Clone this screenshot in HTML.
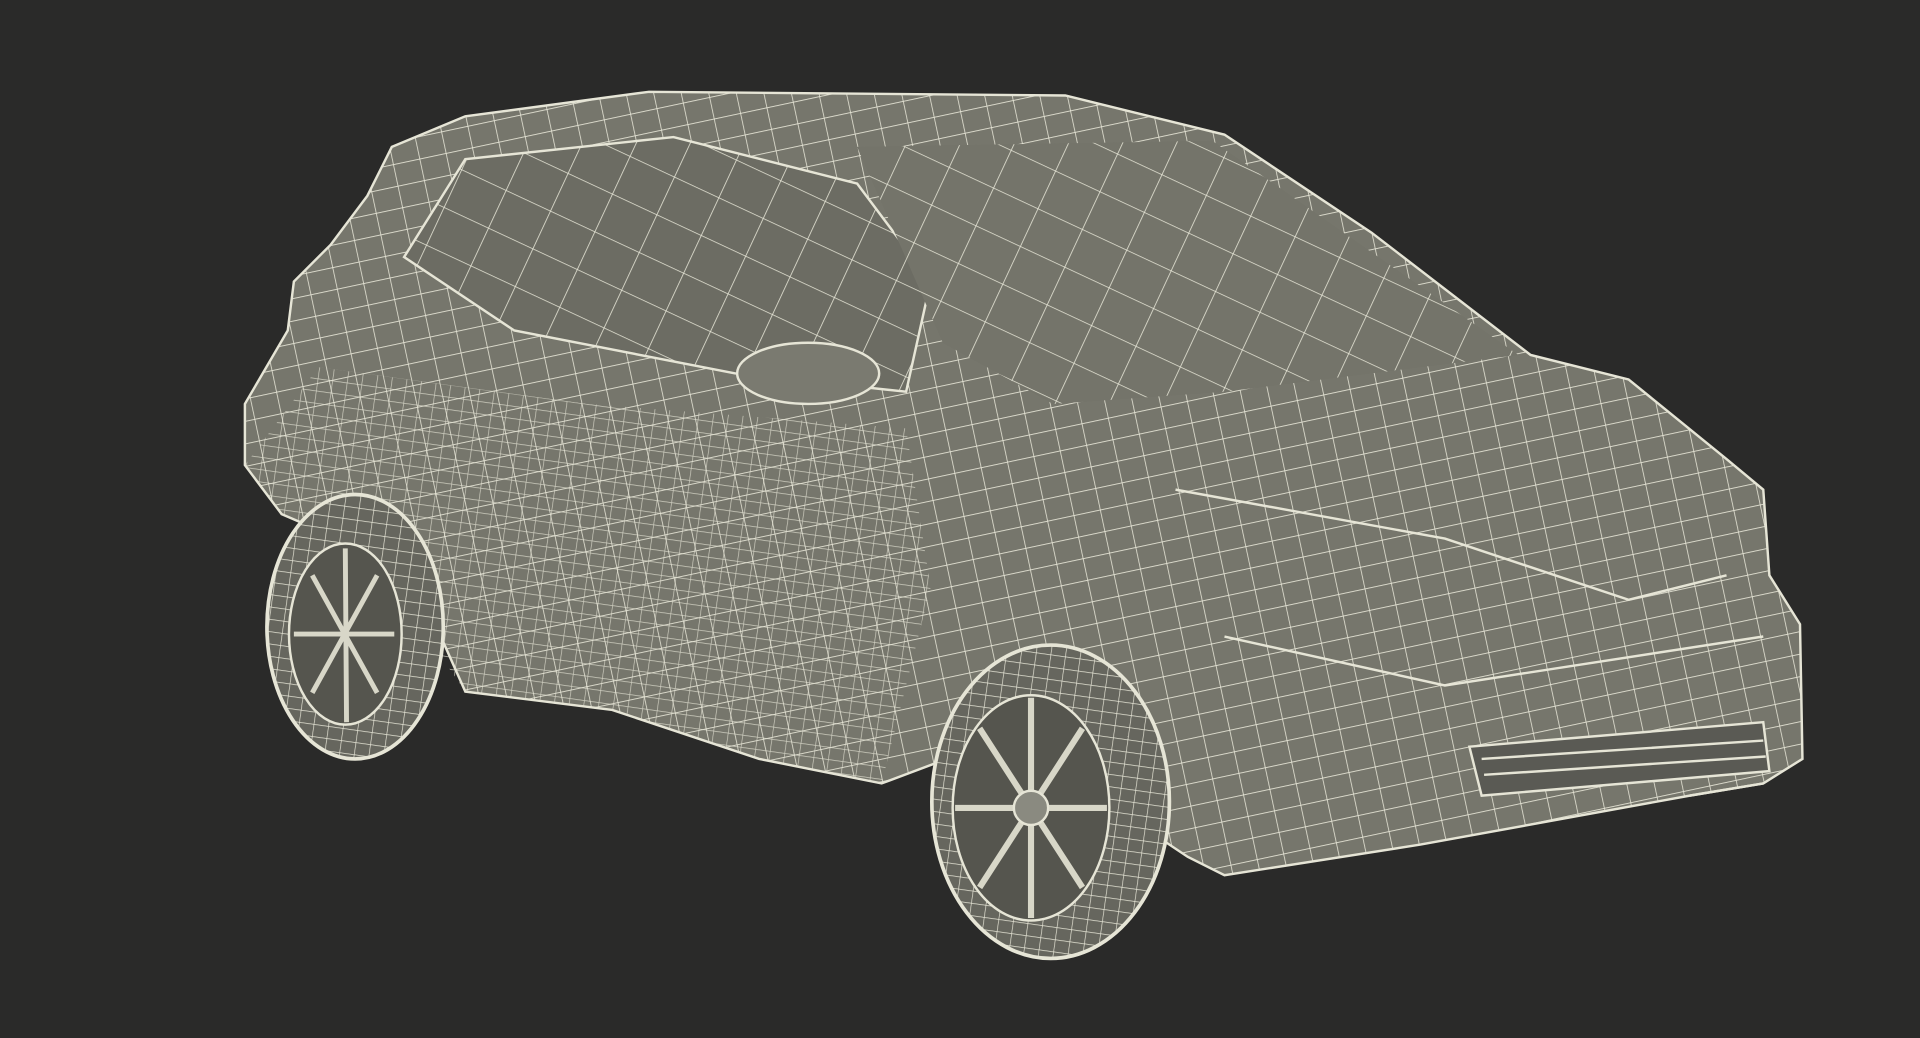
<!DOCTYPE html>
<html><head><meta charset="utf-8"><style>
html,body{margin:0;padding:0;background:#2a2a29;width:1920px;height:1038px;overflow:hidden}
svg{display:block}
</style></head><body>
<svg width="1920" height="1038" viewBox="0 0 1568 848" preserveAspectRatio="none" xmlns="http://www.w3.org/2000/svg">
<defs>
<pattern id="g" width="22" height="18" patternUnits="userSpaceOnUse" patternTransform="rotate(-12)">
<path d="M0 0H22M0 0V18" stroke="#e6e5d6" stroke-width="1.3" fill="none"/>
</pattern>
<pattern id="gf" width="12" height="10" patternUnits="userSpaceOnUse" patternTransform="rotate(8)">
<path d="M0 0H12M0 0V10" stroke="#e6e5d6" stroke-width="1.1" fill="none"/>
</pattern>
<pattern id="gw" width="40" height="34" patternUnits="userSpaceOnUse" patternTransform="rotate(25)">
<path d="M0 0H40M0 0V34" stroke="#e6e5d6" stroke-width="1.3" fill="none"/>
</pattern>
</defs>
<rect width="1568" height="848" fill="#2a2a29"/>
<path d="M320 120 L380 95 L530 75 L870 78 L1000 110 L1120 190 L1250 290 L1330 310 L1410 375 L1440 400 L1445 470 L1470 510 L1472 620 L1440 640 L1380 650 L1160 690 L1000 715 L970 700 L940 680 L900 640 L800 610 L720 640 L620 620 L500 580 L380 565 L360 520 L300 450 L230 420 L200 380 L200 330 L235 270 L240 230 L270 200 L300 160 Z" fill="#76766c" stroke="#e6e5d6" stroke-width="2"/>
<path d="M320 120 L380 95 L530 75 L870 78 L1000 110 L1120 190 L1250 290 L1330 310 L1410 375 L1440 400 L1445 470 L1470 510 L1472 620 L1440 640 L1380 650 L1160 690 L1000 715 L970 700 L940 680 L900 640 L800 610 L720 640 L620 620 L500 580 L380 565 L360 520 L300 450 L230 420 L200 380 L200 330 L235 270 L240 230 L270 200 L300 160 Z" fill="url(#g)"/>
<path d="M260 300 L480 330 L740 350 L760 480 L720 640 L620 620 L500 580 L380 565 L300 450 L230 420 L200 380 Z" fill="url(#gf)" opacity="0.8"/>
<path d="M330 210 L380 130 L550 112 L700 150 L760 230 L740 320 L600 305 L420 270 Z" fill="#6c6c63" stroke="#e6e5d6" stroke-width="2"/>
<path d="M330 210 L380 130 L550 112 L700 150 L760 230 L740 320 L600 305 L420 270 Z" fill="url(#gw)"/>
<path d="M700 120 L990 115 L1240 290 L1000 320 L860 330 L770 280 Z" fill="#74746a"/>
<path d="M700 120 L990 115 L1240 290 L1000 320 L860 330 L770 280 Z" fill="url(#gw)"/>
<path d="M960 400 L1180 440 L1330 490 L1410 470 M1000 520 L1180 560 L1440 520 M1380 650 L1440 640" stroke="#e6e5d6" stroke-width="2" fill="none"/>
<path d="M1200 610 L1440 590 L1445 630 L1210 650 Z" fill="#5a5a54" stroke="#e6e5d6" stroke-width="2"/>
<path d="M1210 620 L1440 605 M1212 633 L1442 618" stroke="#e6e5d6" stroke-width="2"/>
<ellipse cx="660" cy="305" rx="58" ry="25" fill="#7a7a70" stroke="#e6e5d6" stroke-width="2"/>
<ellipse cx="290" cy="512" rx="72" ry="108" fill="#66665e" stroke="#e6e5d6" stroke-width="3"/>
<ellipse cx="290" cy="512" rx="72" ry="108" fill="url(#gf)"/>
<ellipse cx="282" cy="518" rx="46" ry="74" fill="#55554e" stroke="#e6e5d6" stroke-width="2"/>
<path d="M282 448 L283 590 M240 518 L322 518 M255 470 L308 566 M308 470 L255 566" stroke="#d8d7c8" stroke-width="4"/>
<ellipse cx="858" cy="655" rx="97" ry="128" fill="#66665e" stroke="#e6e5d6" stroke-width="3"/>
<ellipse cx="858" cy="655" rx="97" ry="128" fill="url(#gf)"/>
<ellipse cx="842" cy="660" rx="64" ry="92" fill="#55554e" stroke="#e6e5d6" stroke-width="2"/>
<path d="M842 570 L842 750 M780 660 L904 660 M800 595 L884 725 M884 595 L800 725" stroke="#d8d7c8" stroke-width="5"/>
<circle cx="842" cy="660" r="14" fill="#8a8a80" stroke="#e6e5d6" stroke-width="2"/>
</svg>
</body></html>
